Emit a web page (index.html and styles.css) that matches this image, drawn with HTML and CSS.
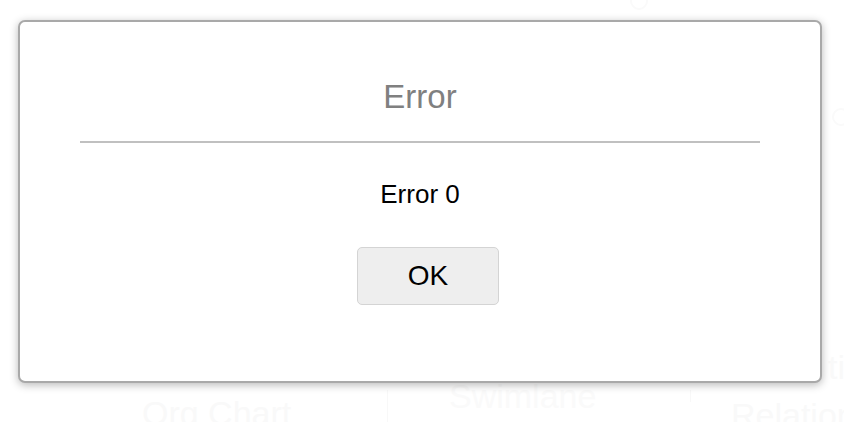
FILE: index.html
```html
<!DOCTYPE html>
<html lang="en">
<head>
<meta charset="utf-8">
<title>Error</title>
<link rel="stylesheet" href="styles.css">
</head>
<body>
<div class="canvas">
  <span class="ghost ghost-org">Org Chart</span>
  <span class="ghost ghost-swim">Swimlane</span>
  <span class="ghost ghost-rel">Relationship</span>
  <span class="ghost ghost-ti">ti</span>
  <span class="ghost-ring ring-top"></span>
  <span class="ghost-ring ring-right"></span>
  <span class="ghost-rule rule-a"></span>
  <span class="ghost-rule rule-b"></span>
</div>
<div class="dialog" role="dialog" aria-labelledby="dlg-title">
  <h1 class="dialog-title" id="dlg-title">Error</h1>
  <hr class="dialog-sep">
  <p class="dialog-msg">Error 0</p>
  <button class="dialog-btn" type="button">OK</button>
</div>
</body>
</html>
```
FILE: styles.css
```css
html, body {
  margin: 0;
  padding: 0;
  background: #ffffff;
  width: 844px;
  height: 422px;
  overflow: hidden;
  font-family: "Liberation Sans", Arial, Helvetica, sans-serif;
}

.canvas {
  position: relative;
  width: 844px;
  height: 422px;
  overflow: hidden;
}

.ghost {
  position: absolute;
  color: #f9f9f9;
  font-size: 34px;
  line-height: 1;
  white-space: nowrap;
}
.ghost-org { left: 142px; top: 396px; }
.ghost-swim { left: 449px; top: 379px; color: #fafafa; }
.ghost-rel { left: 731px; top: 398px; }
.ghost-ti { left: 828px; top: 350px; }

.ghost-ring {
  position: absolute;
  width: 14px;
  height: 14px;
  border: 2px solid #fafafa;
  border-radius: 50%;
}
.ring-top { left: 630px; top: -8px; }
.ring-right { left: 832px; top: 108px; }

.ghost-rule {
  position: absolute;
  width: 1px;
  background: #f8f8f8;
}
.rule-a { left: 387px; top: 390px; height: 32px; }
.rule-b { left: 690px; top: 390px; height: 12px; }

.dialog {
  position: absolute;
  left: 18px;
  top: 20px;
  width: 804px;
  height: 363px;
  box-sizing: border-box;
  background: #ffffff;
  border: 2px solid #a9a9a9;
  border-radius: 7px;
  box-shadow: 0 2px 8px rgba(0, 0, 0, 0.28);
  padding: 57px 60px 0;
  display: flex;
  flex-direction: column;
  align-items: center;
}

.dialog-title {
  margin: 0;
  font-weight: normal;
  font-size: 33px;
  line-height: 36px;
  color: #808080;
}

.dialog-sep {
  align-self: stretch;
  margin: 26px 0 0;
  border: 0;
  height: 2px;
  background: #c0c0c0;
}

.dialog-msg {
  margin: 36px 0 0;
  font-size: 26px;
  line-height: 30px;
  color: #000000;
}

.dialog-btn {
  margin: 38px 0 0 16px;
  width: 142px;
  height: 58px;
  box-sizing: border-box;
  background: #eeeeee;
  border: 1px solid #d4d4d4;
  border-radius: 5px;
  font-family: "Liberation Sans", Arial, Helvetica, sans-serif;
  font-size: 28px;
  color: #000000;
  padding: 0;
  display: flex;
  align-items: center;
  justify-content: center;
}
```
